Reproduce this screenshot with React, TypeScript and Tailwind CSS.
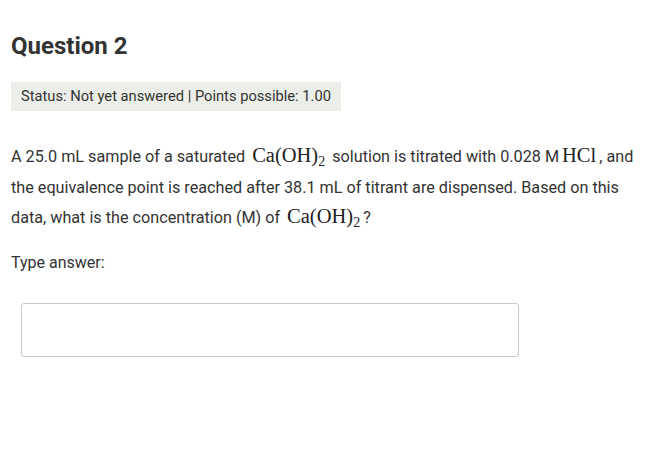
import type { ReactNode } from 'react'

function Chem({ children, sub }: { children: ReactNode; sub?: string }) {
  return (
    <span className="mx-[3px] font-['Liberation_Serif',serif] text-[20.5px] leading-none text-[#222]">
      {children}
      {sub ? <sub className="text-[14px] leading-none">{sub}</sub> : null}
    </span>
  )
}

export default function App() {
  return (
    <div className="min-h-[458px] bg-white pl-[11px] pr-[24px] font-['Roboto',sans-serif] text-[#333]">
      <h2 className="pt-[32px] text-[24px] font-bold leading-[28px] text-[#333]">Question 2</h2>

      <div className="mt-[22px] inline-block bg-[#eceee9] px-[10px] py-[5px] text-[14.7px] leading-[19px] text-[#333]">
        Status: Not yet answered | Points possible: 1.00
      </div>

      <p className="mt-[31px] text-[16.2px] leading-[30.7px] text-[#333]">
        A 25.0 mL sample of a saturated <Chem sub="2">Ca(OH)</Chem> solution is titrated with 0.028 M
        <Chem>HCl</Chem>, and the equivalence point is reached after 38.1 mL of titrant are dispensed.
        Based on this data, what is the concentration (M) of <Chem sub="2">Ca(OH)</Chem>?
      </p>

      <p className="mt-[19px] text-[16px] leading-[20px] text-[#333]">Type answer:</p>

      <div className="mt-[30px] pl-[10px]">
        <input
          className="h-[54px] w-[498px] rounded-[3px] border border-[#c8c8c8] bg-white px-2 outline-none"
          type="text"
        />
      </div>
    </div>
  )
}
